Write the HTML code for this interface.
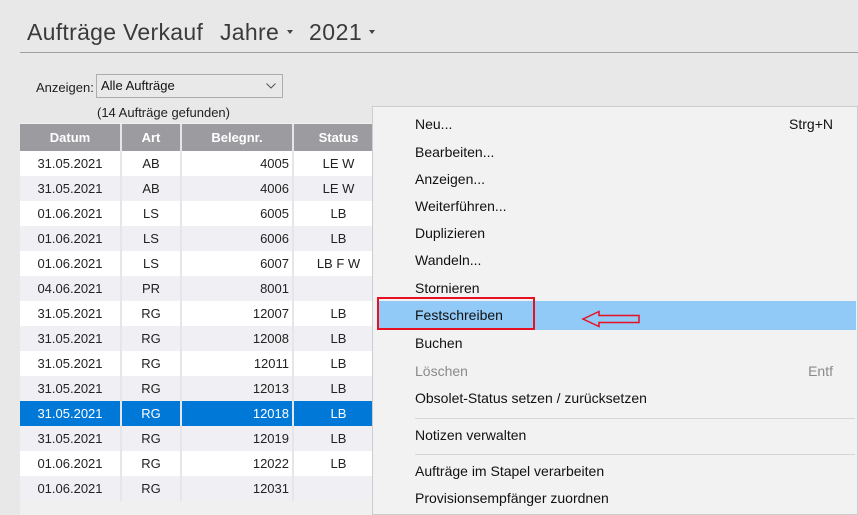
<!DOCTYPE html>
<html><head><meta charset="utf-8"><style>
body{margin:0;width:858px;height:515px;overflow:hidden;background:#e8e8e8;font-family:"Liberation Sans",sans-serif;position:relative}
.a{position:absolute}
.title{top:19px;font-size:23px;color:#3a3a3a;white-space:pre}
.tri{position:absolute;width:0;height:0;border-left:3px solid transparent;border-right:3px solid transparent;border-top:4px solid #444}
table{border-collapse:collapse;font-size:13px;color:#222;table-layout:fixed}
td{height:25px;padding:0;border-right:2px solid #e6e6ea;text-align:center}
th{height:25px;background:#9b9ba0;color:#fff;font-weight:bold;border-right:2px solid #e6e6e6;font-size:13px}
tr:nth-child(even) td{background:#fff}
tr:nth-child(odd) td{background:#f0f0f4}
tr.sel td{background:#0078d7!important;color:#fff}
td.r{text-align:right;padding-right:3px}
.menu{left:372px;top:106px;width:486px;height:409px;background:#f2f2f2;border:1px solid #ccc;box-sizing:border-box}
.it{position:absolute;left:42px;font-size:14px;color:#111}
.sc{position:absolute;right:24px;font-size:14px;color:#111}
.sep{position:absolute;left:42px;right:2px;height:1px;background:#d6d6d6}
</style></head><body>
<div class="a title" style="left:27px;letter-spacing:0.3px">Aufträge Verkauf</div>
<div class="a title" style="left:220px;letter-spacing:0.3px">Jahre</div>
<div class="a tri" style="left:287px;top:30px"></div>
<div class="a title" style="left:309px;letter-spacing:0.5px">2021</div>
<div class="a tri" style="left:369px;top:30px"></div>
<div class="a" style="left:20px;top:52px;width:838px;height:1px;background:#a0a0a0"></div>
<div class="a" style="left:36px;top:80px;font-size:13px;color:#222">Anzeigen:</div>
<div class="a" style="left:96px;top:74px;width:187px;height:24px;background:#e9e9e9;border:1px solid #adadad;box-sizing:border-box;font-size:13px;line-height:22px;padding-left:4px;color:#111">Alle Aufträge
<svg class="a" style="right:6px;top:8px" width="10" height="6"><path d="M0.5 0.5L5 5L9.5 0.5" stroke="#555" fill="none"/></svg></div>
<div class="a" style="left:97px;top:105px;font-size:13px;color:#222">(14 Aufträge gefunden)</div>
<div class="a" style="left:20px;top:123px;width:352px;height:392px;background:#f0f0f0"></div>
<table class="a" style="left:20px;top:124px;width:365px">
<colgroup><col style="width:101px"><col style="width:60px"><col style="width:112px"><col></colgroup>
<tr><th>Datum</th><th>Art</th><th>Belegnr.</th><th>Status</th></tr>
<tr><td>31.05.2021</td><td>AB</td><td class="r">4005</td><td>LE W</td></tr>
<tr><td>31.05.2021</td><td>AB</td><td class="r">4006</td><td>LE W</td></tr>
<tr><td>01.06.2021</td><td>LS</td><td class="r">6005</td><td>LB</td></tr>
<tr><td>01.06.2021</td><td>LS</td><td class="r">6006</td><td>LB</td></tr>
<tr><td>01.06.2021</td><td>LS</td><td class="r">6007</td><td>LB F W</td></tr>
<tr><td>04.06.2021</td><td>PR</td><td class="r">8001</td><td></td></tr>
<tr><td>31.05.2021</td><td>RG</td><td class="r">12007</td><td>LB</td></tr>
<tr><td>31.05.2021</td><td>RG</td><td class="r">12008</td><td>LB</td></tr>
<tr><td>31.05.2021</td><td>RG</td><td class="r">12011</td><td>LB</td></tr>
<tr><td>31.05.2021</td><td>RG</td><td class="r">12013</td><td>LB</td></tr>
<tr class="sel"><td>31.05.2021</td><td>RG</td><td class="r">12018</td><td>LB</td></tr>
<tr><td>31.05.2021</td><td>RG</td><td class="r">12019</td><td>LB</td></tr>
<tr><td>01.06.2021</td><td>RG</td><td class="r">12022</td><td>LB</td></tr>
<tr><td>01.06.2021</td><td>RG</td><td class="r">12031</td><td></td></tr>
</table>
<div class="a menu">
<div class="a" style="left:4px;top:194px;width:479px;height:29px;background:#91c9f7"></div>
<div class="it" style="top:9px">Neu...</div><div class="sc" style="top:9px">Strg+N</div>
<div class="it" style="top:37px">Bearbeiten...</div>
<div class="it" style="top:64px">Anzeigen...</div>
<div class="it" style="top:91px">Weiterführen...</div>
<div class="it" style="top:118px">Duplizieren</div>
<div class="it" style="top:145px">Wandeln...</div>
<div class="it" style="top:173px">Stornieren</div>
<div class="it" style="top:200px">Festschreiben</div>
<div class="it" style="top:228px">Buchen</div>
<div class="it" style="top:256px;color:#8a8a8a">Löschen</div><div class="sc" style="top:256px;color:#8a8a8a">Entf</div>
<div class="it" style="top:283px">Obsolet-Status setzen / zurücksetzen</div>
<div class="sep" style="top:311px"></div>
<div class="it" style="top:320px">Notizen verwalten</div>
<div class="sep" style="top:347px"></div>
<div class="it" style="top:356px">Aufträge im Stapel verarbeiten</div>
<div class="it" style="top:383px">Provisionsempfänger zuordnen</div>
</div>
<div class="a" style="left:377px;top:297px;width:158px;height:33px;border:2px solid #e81123;box-sizing:border-box"></div>
<svg class="a" style="left:580px;top:309px" width="64" height="20"><path d="M3 10L19 2.5V6.5H59V13.5H19V17.5Z" fill="none" stroke="#e81123" stroke-width="1.5"/></svg>
</body></html>
